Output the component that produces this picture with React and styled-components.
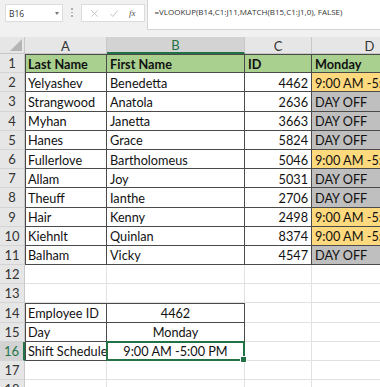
import React from 'react';
import styled, { createGlobalStyle } from 'styled-components';

const GlobalStyle = createGlobalStyle`
  html, body {
    margin: 0;
    padding: 0;
    overflow: hidden;
    background: #fff;
  }
`;

const Page = styled.div`
  width: 380px;
  height: 387px;
  overflow: hidden;
  background: #fff;
  font-family: Lato, 'Liberation Sans', sans-serif;
`;

const Toolbar = styled.div`
  display: flex;
  align-items: flex-start;
  height: 37px;
  background: #f1f1f1;
  box-sizing: border-box;
`;

const NameBox = styled.div`
  display: flex;
  align-items: center;
  justify-content: space-between;
  width: 58px;
  height: 18px;
  margin: 4px 0 0 5px;
  padding: 0 3px;
  box-sizing: border-box;
  background: #fff;
  border: 1px solid #dcdcdc;
  font-family: 'Open Sans', sans-serif;
  font-size: 8.5px;
  color: #333;
`;

const Caret = styled.span`
  width: 0;
  height: 0;
  border-left: 2.5px solid transparent;
  border-right: 2.5px solid transparent;
  border-top: 3px solid #777;
`;

const Grip = styled.div`
  display: flex;
  flex-direction: column;
  gap: 2px;
  margin: 8px 8px 0 8px;
  span {
    width: 1.5px;
    height: 1.5px;
    background: #b0b0b0;
  }
`;

const ButtonBox = styled.div`
  display: flex;
  align-items: center;
  justify-content: space-around;
  width: 64px;
  height: 18px;
  margin-top: 4px;
  background: #fff;
  border: 1px solid #dcdcdc;
  box-sizing: border-box;
  padding: 0 3px;
`;

const Fx = styled.span`
  font-family: 'Liberation Serif', serif;
  font-style: italic;
  font-size: 9px;
  color: #555;
`;

const FormulaBox = styled.div`
  flex: 1;
  height: 30px;
  margin-left: 2px;
  padding: 6px 0 0 7px;
  box-sizing: border-box;
  background: #fff;
  border-left: 1px solid #d4d4d4;
  border-bottom: 1px solid #d4d4d4;
  font-family: 'Open Sans', sans-serif;
  font-size: 8px;
  color: #333;
  white-space: nowrap;
`;

const Sheet = styled.div`
  display: grid;
  grid-template-columns: 25px 82px 138px 67px 116px;
  grid-template-rows: 17px;
  grid-auto-rows: 19.2px;
  width: 428px;
`;

const Corner = styled.div`
  position: relative;
  background: #e6e6e6;
  border-right: 1px solid #c8c8c8;
  border-bottom: 1px solid #c8c8c8;
  box-sizing: border-box;
  &::after {
    content: '';
    position: absolute;
    right: 2px;
    bottom: 2px;
    width: 0;
    height: 0;
    border-left: 12px solid transparent;
    border-bottom: 12px solid #b5b5b5;
  }
`;

const ColHead = styled.div`
  display: flex;
  align-items: center;
  justify-content: center;
  box-sizing: border-box;
  background: ${(p) => (p.$active ? '#d3d3d3' : '#e6e6e6')};
  color: ${(p) => (p.$active ? '#217346' : '#333')};
  border-right: 1px solid #c8c8c8;
  border-bottom: ${(p) => (p.$active ? '2px solid #217346' : '1px solid #c8c8c8')};
  font-size: 13px;
  padding-top: 1px;
`;

const RowHead = styled.div`
  display: flex;
  align-items: center;
  justify-content: center;
  box-sizing: border-box;
  background: ${(p) => (p.$active ? '#d3d3d3' : '#e6e6e6')};
  color: ${(p) => (p.$active ? '#217346' : '#333')};
  border-right: ${(p) => (p.$active ? '2px solid #217346' : '1px solid #c8c8c8')};
  border-bottom: 1px solid #d4d4d4;
  font-size: 13px;
`;

const Cell = styled.div`
  position: relative;
  display: flex;
  align-items: center;
  justify-content: ${(p) => p.$align || 'flex-start'};
  box-sizing: border-box;
  padding: 1px 3px 0 3px;
  background: ${(p) => p.$bg || '#fff'};
  border-right: 1px solid ${(p) => (p.$boxed ? '#4a4a4a' : '#e1e1e1')};
  border-bottom: 1px solid ${(p) => (p.$boxed ? '#4a4a4a' : '#e1e1e1')};
  box-shadow: ${(p) =>
    [p.$boxTop && 'inset 0 1px 0 #4a4a4a', p.$boxLeft && 'inset 1px 0 0 #4a4a4a']
      .filter(Boolean)
      .join(', ') || 'none'};
  font-size: 12.7px;
  font-weight: ${(p) => (p.$bold ? 700 : 400)};
  color: #111;
  white-space: nowrap;
  overflow: ${(p) => (p.$selected ? 'visible' : 'hidden')};
  z-index: ${(p) => (p.$selected ? 2 : 1)};
`;

const Selection = styled.div`
  position: absolute;
  left: -1px;
  top: -1px;
  right: -1px;
  bottom: -1px;
  border: 2px solid #217346;
  pointer-events: none;
  &::after {
    content: '';
    position: absolute;
    right: -4px;
    bottom: -4px;
    width: 5px;
    height: 5px;
    background: #217346;
    border: 1px solid #fff;
  }
`;

const employees = [
  ['Yelyashev', 'Benedetta', 4462, true],
  ['Strangwood', 'Anatola', 2636, false],
  ['Myhan', 'Janetta', 3663, false],
  ['Hanes', 'Grace', 5824, false],
  ['Fullerlove', 'Bartholomeus', 5046, true],
  ['Allam', 'Joy', 5031, false],
  ['Theuff', 'Ianthe', 2706, false],
  ['Hair', 'Kenny', 2498, true],
  ['Kiehnlt', 'Quinlan', 8374, true],
  ['Balham', 'Vicky', 4547, false],
];

const GREEN = '#a9d08e';
const YELLOW = '#ffd97d';
const GRAY = '#bfbfbf';

const EmptyRow = ({ n }) => (
  <>
    <RowHead>{n}</RowHead>
    <Cell />
    <Cell />
    <Cell />
    <Cell />
  </>
);

const App = () => {
  return (
    <Page>
      <GlobalStyle />
      <Toolbar>
        <NameBox>
          B16
          <Caret />
        </NameBox>
        <Grip>
          <span />
          <span />
          <span />
        </Grip>
        <ButtonBox>
          <svg width="9" height="9" viewBox="0 0 10 10">
            <path d="M1.5 1.5 L8.5 8.5 M8.5 1.5 L1.5 8.5" stroke="#c4c4c4" strokeWidth="1.1" />
          </svg>
          <svg width="10" height="9" viewBox="0 0 10 10">
            <path d="M1 5.5 L3.8 8.3 L9 1.8" stroke="#c4c4c4" strokeWidth="1.1" fill="none" />
          </svg>
          <Fx>fx</Fx>
        </ButtonBox>
        <FormulaBox>=VLOOKUP(B14,C1:J11,MATCH(B15,C1:J1,0), FALSE)</FormulaBox>
      </Toolbar>

      <Sheet>
        <Corner />
        <ColHead>A</ColHead>
        <ColHead $active>B</ColHead>
        <ColHead>C</ColHead>
        <ColHead>D</ColHead>

        <RowHead>1</RowHead>
        <Cell $boxed $boxLeft $boxTop $bg={GREEN} $bold>Last Name</Cell>
        <Cell $boxed $boxTop $bg={GREEN} $bold>First Name</Cell>
        <Cell $boxed $boxTop $bg={GREEN} $bold>ID</Cell>
        <Cell $boxed $boxTop $bg={GREEN} $bold>Monday</Cell>

        {employees.map(([last, first, id, shift], i) => (
          <React.Fragment key={id}>
            <RowHead>{i + 2}</RowHead>
            <Cell $boxed $boxLeft>{last}</Cell>
            <Cell $boxed>{first}</Cell>
            <Cell $boxed $align="flex-end">{id}</Cell>
            <Cell $boxed $bg={shift ? YELLOW : GRAY}>
              {shift ? '9:00 AM -5:00 PM' : 'DAY OFF'}
            </Cell>
          </React.Fragment>
        ))}

        <EmptyRow n={12} />
        <EmptyRow n={13} />

        <RowHead>14</RowHead>
        <Cell $boxed $boxLeft $boxTop>Employee ID</Cell>
        <Cell $boxed $boxTop $align="center">4462</Cell>
        <Cell />
        <Cell />

        <RowHead>15</RowHead>
        <Cell $boxed $boxLeft>Day</Cell>
        <Cell $boxed $align="center">Monday</Cell>
        <Cell />
        <Cell />

        <RowHead $active>16</RowHead>
        <Cell $boxed $boxLeft>Shift Schedule</Cell>
        <Cell $boxed $align="center" $selected>
          9:00 AM -5:00 PM
          <Selection />
        </Cell>
        <Cell />
        <Cell />

        <EmptyRow n={17} />
        <EmptyRow n={18} />
      </Sheet>
    </Page>
  );
};

export default App;
